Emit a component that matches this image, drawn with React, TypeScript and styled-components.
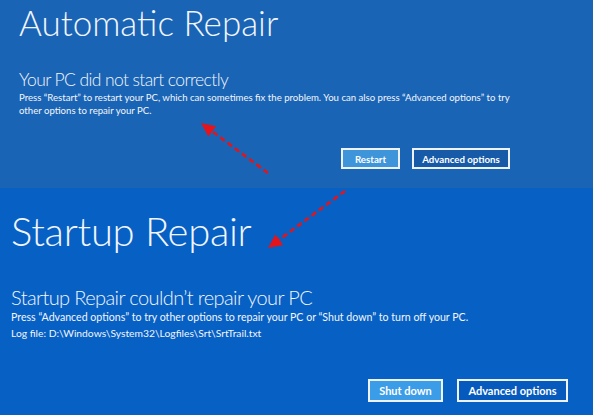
import React from 'react';
import styled, { createGlobalStyle } from 'styled-components';

const GlobalStyle = createGlobalStyle`
  html, body {
    margin: 0;
    padding: 0;
    background: #0760c4;
  }
  body {
    font-family: Lato, "Open Sans", "Liberation Sans", sans-serif;
    color: #f2f6fc;
  }
`;

const Screen = styled.div`
  position: relative;
  width: 593px;
  height: 415px;
  overflow: hidden;
  display: flex;
  flex-direction: column;
`;

const Panel = styled.section<{ $bg: string; $h: number; $pl: number; $pt: number }>`
  height: ${(p) => p.$h}px;
  background: ${(p) => p.$bg};
  padding: ${(p) => p.$pt}px 0 0 ${(p) => p.$pl}px;
  box-sizing: border-box;
  display: flex;
  flex-direction: column;
`;

const Title = styled.h1<{ $size: number; $lh: number; $ls: number }>`
  margin: 0;
  font-size: ${(p) => p.$size}px;
  line-height: ${(p) => p.$lh}px;
  letter-spacing: ${(p) => p.$ls}px;
  font-weight: 300;
  white-space: nowrap;
`;

const Subtitle = styled.h2<{ $mt: number; $size: number; $lh: number }>`
  margin: ${(p) => p.$mt}px 0 0;
  font-size: ${(p) => p.$size}px;
  line-height: ${(p) => p.$lh}px;
  letter-spacing: -0.6px;
  font-weight: 300;
  white-space: nowrap;
`;

const Body = styled.p<{ $mt: number; $size: number }>`
  margin: ${(p) => p.$mt}px 0 0;
  font-size: ${(p) => p.$size}px;
  line-height: 13px;
  width: 570px;
  white-space: nowrap;
`;

const ButtonRow = styled.div<{ $mt: number; $pr: number; $gap: number }>`
  margin-top: ${(p) => p.$mt}px;
  padding-right: ${(p) => p.$pr}px;
  display: flex;
  justify-content: flex-end;
  gap: ${(p) => p.$gap}px;
`;

const Button = styled.button<{ $w: number; $h: number; $fill: string; $size: number }>`
  width: ${(p) => p.$w}px;
  height: ${(p) => p.$h}px;
  box-sizing: border-box;
  border: 2px solid #eef3fa;
  background: ${(p) => p.$fill};
  color: #ffffff;
  font-family: Lato, "Liberation Sans", sans-serif;
  font-weight: 700;
  font-size: ${(p) => p.$size}px;
  padding: 0;
  display: flex;
  align-items: center;
  justify-content: center;
`;

const Overlay = styled.svg`
  position: absolute;
  left: 0;
  top: 0;
  pointer-events: none;
`;

type ArrowProps = { x1: number; y1: number; x2: number; y2: number };

const Arrow: React.FC<ArrowProps> = ({ x1, y1, x2, y2 }) => {
  const dx = x2 - x1;
  const dy = y2 - y1;
  const len = Math.hypot(dx, dy);
  const ux = dx / len;
  const uy = dy / len;
  const head = 14;
  const half = 6.5;
  const bx = x2 - ux * head;
  const by = y2 - uy * head;
  const pts = `${x2},${y2} ${bx - uy * half},${by + ux * half} ${bx + uy * half},${by - ux * half}`;
  return (
    <g>
      <line x1={x1} y1={y1} x2={bx} y2={by} stroke="#e3141b" strokeWidth={2.6} strokeDasharray="5.5 3.5" />
      <polygon points={pts} fill="#e3141b" />
    </g>
  );
};

const App: React.FC = () => {
  return (
    <>
      <GlobalStyle />
      <Screen>
        <Panel $bg="#1a64b5" $h={188} $pl={19} $pt={1}>
          <Title $size={35} $lh={42} $ls={0}>Automatic Repair</Title>
          <Subtitle $mt={26} $size={17.5} $lh={21}>Your PC did not start correctly</Subtitle>
          <Body $mt={1} $size={9.6}>
            Press “Restart” to restart your PC, which can sometimes fix the problem. You can also press “Advanced options” to try
            <br />
            other options to repair your PC.
          </Body>
          <ButtonRow $mt={31} $pr={83} $gap={12}>
            <Button $w={59} $h={21} $size={9.7} $fill="#3f95d9">Restart</Button>
            <Button $w={98} $h={21} $size={9.7} $fill="#175aa8">Advanced options</Button>
          </ButtonRow>
        </Panel>
        <Panel $bg="#0760c4" $h={227} $pl={11} $pt={19}>
          <Title $size={40} $lh={48} $ls={-0.3}>Startup Repair</Title>
          <Subtitle $mt={30} $size={20} $lh={24}>Startup Repair couldn’t repair your PC</Subtitle>
          <Body $mt={2} $size={10.6}>
            Press “Advanced options” to try other options to repair your PC or “Shut down” to turn off your PC.
          </Body>
          <Body $mt={3} $size={10.3}>Log file: D:\Windows\System32\Logfiles\Srt\SrtTrail.txt</Body>
          <ButtonRow $mt={39} $pr={25} $gap={14}>
            <Button $w={75} $h={23} $size={11} $fill="#3b9ce8">Shut down</Button>
            <Button $w={111} $h={23} $size={11} $fill="#0659bd">Advanced options</Button>
          </ButtonRow>
        </Panel>
        <Overlay width={593} height={415} viewBox="0 0 593 415">
          <Arrow x1={268} y1={173} x2={201} y2={123} />
          <Arrow x1={345} y1={191} x2={268} y2={248} />
        </Overlay>
      </Screen>
    </>
  );
};

export default App;
